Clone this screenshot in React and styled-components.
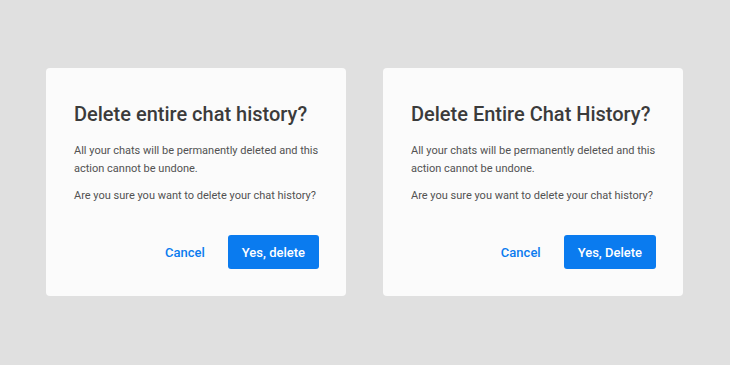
import React from 'react';
import styled, { createGlobalStyle } from 'styled-components';

const Global = createGlobalStyle`
  html, body {
    margin: 0;
    padding: 0;
    background: #e0e0e0;
    font-family: Roboto, "Liberation Sans", sans-serif;
  }
`;

const Page = styled.div`
  display: flex;
  gap: 37px;
  padding: 68px 0 0 46px;
  height: 365px;
  box-sizing: border-box;
`;

const Card = styled.div`
  width: 300px;
  height: 228px;
  box-sizing: border-box;
  background: #fbfbfb;
  border-radius: 4px;
  padding: 31px 26px 27px 28px;
  display: flex;
  flex-direction: column;
`;

const Title = styled.h2`
  margin: 0 0 13px;
  font-size: 20px;
  line-height: 30px;
  font-weight: 500;
  color: #3b3b3b;
`;

const Text = styled.p`
  margin: 0 0 9px;
  font-size: 11px;
  line-height: 18px;
  color: #525252;
`;

const Actions = styled.div`
  margin-top: auto;
  margin-right: 1px;
  display: flex;
  justify-content: flex-end;
  align-items: center;
  gap: 23px;
`;

const Button = styled.button`
  font-family: inherit;
  font-size: 13px;
  font-weight: 500;
  border: none;
  border-radius: 3px;
  height: 34px;
  cursor: pointer;
  padding: ${p => (p.primary ? '0 14px' : '0')};
  background: ${p => (p.primary ? '#0a7bef' : 'transparent')};
  color: ${p => (p.primary ? '#ffffff' : '#0a7bef')};
`;

const Dialog = ({ title, confirm }) => (
  <Card>
    <Title>{title}</Title>
    <Text>All your chats will be permanently deleted and this action cannot be undone.</Text>
    <Text>Are you sure you want to delete your chat history?</Text>
    <Actions>
      <Button>Cancel</Button>
      <Button primary>{confirm}</Button>
    </Actions>
  </Card>
);

export default function App() {
  return (
    <>
      <Global />
      <Page>
        <Dialog title="Delete entire chat history?" confirm="Yes, delete" />
        <Dialog title="Delete Entire Chat History?" confirm="Yes, Delete" />
      </Page>
    </>
  );
}
